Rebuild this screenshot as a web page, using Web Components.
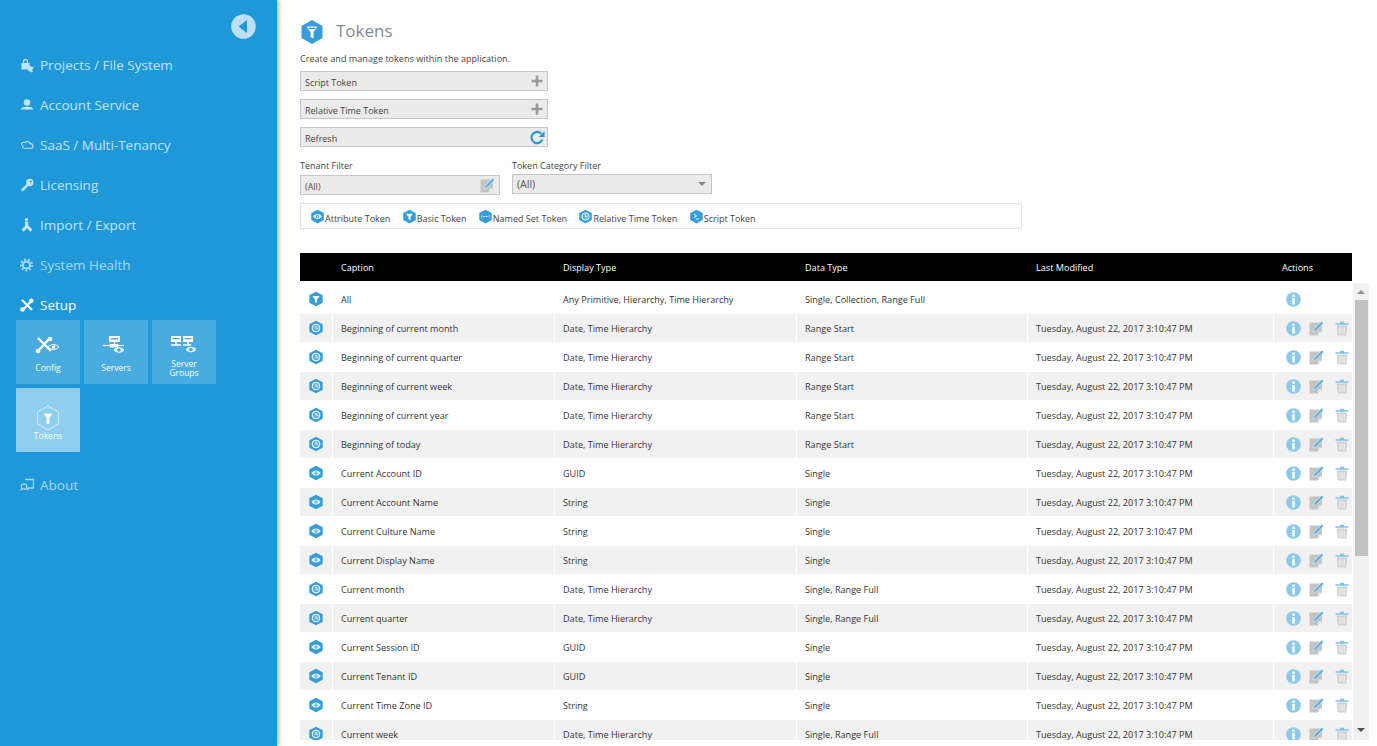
<!DOCTYPE html>
<html><head><meta charset="utf-8"><style>
html,body{margin:0;height:100%;overflow:hidden;background:#fff;font-family:"Open Sans","Noto Sans",sans-serif}
body{display:flex;height:746px}
</style></head><body>
<app-sidebar></app-sidebar>
<tokens-page></tokens-page>
<script>
const HEX='M12 1 22 6.500V17.500L12 23 2 17.500V6.500Z';
const BLUE='#359dda';
const glyph={
 funnel:'<path d="M6.500 7.500h11l-4 5.200v5.300l-3-1.500v-3.800z" fill="#fff"/>',
 clock:`<circle cx="12" cy="12" r="5.800" fill="#62b3e4" stroke="#fff" stroke-width="1.500"/><path d="M12 8.800v3.600h3" fill="none" stroke="#fff" stroke-width="1.300"/>`,
 eye:`<path d="M5 12c2-2.800 4.500-3.900 7-3.900s5 1.100 7 3.900c-2 2.800-4.500 3.900-7 3.900s-5-1.100-7-3.900z" fill="#e4f3fb"/><circle cx="12" cy="12" r="2.400" fill="${BLUE}"/><circle cx="12" cy="12" r="1" fill="#fff"/>`,
 dots:'<path d="M6 10v4M18 10v4" stroke="#fff" stroke-width="1" fill="none"/><path d="M8 12h8" stroke="#fff" stroke-width="1.600" stroke-dasharray="1.400 1.100" fill="none"/>',
 script:'<path d="M8 8l4 3-4 3" fill="none" stroke="#fff" stroke-width="1.600"/><path d="M11 16h5" stroke="#fff" stroke-width="1.500"/>'
};
const hexIcon=(g,s=16)=>`<svg width="${s}" height="${s}" viewBox="0 0 24 24" style="display:block;flex:none"><path d="${HEX}" fill="${BLUE}"/>${glyph[g]}</svg>`;
const plus=`<svg width="12" height="12" viewBox="0 0 12 12"><path d="M6 .5v11M.5 6h11" stroke="#9a9a9a" stroke-width="2.600"/></svg>`;
const refresh=`<svg width="15" height="15" viewBox="0 0 16 16" style="margin-right:-2px"><path d="M13.200 10.300A6 6 0 1 1 12 4" fill="none" stroke="#2f96d6" stroke-width="2.400"/><path d="M15.500 1.200v6.300H9.200z" fill="#2f96d6"/></svg>`;
const editIcon=(s=16,o=1)=>`<svg width="${s}" height="${s}" viewBox="0 0 16 16" style="display:block;flex:none;opacity:${o}"><path d="M.5 2.500h12.500v8.500l-4.500 4.500H.5z" fill="#c4c4c4"/><path d="M9 11.500h4l-4 4z" fill="#e4e4e4"/><path d="M4 11.800 5 9l7.800-7.800 1.900 1.900L7 10.800z" fill="#62b2e5" stroke="#eef6fb" stroke-width=".5"/></svg>`;
const infoIcon=`<svg width="15" height="15" viewBox="0 0 15 15" style="display:block;flex:none"><circle cx="7.500" cy="7.500" r="7.300" fill="#8cc8ea"/><rect x="6.200" y="2.500" width="2.600" height="2.400" fill="#fff"/><rect x="6.200" y="6" width="2.600" height="6.500" fill="#fff"/></svg>`;
const trashIcon=`<svg width="14" height="15" viewBox="0 0 14 15" style="display:block;flex:none"><path d="M.5 2.200h13v1.600H.5zM5 .7h4v1.600H5z" fill="#7fc2e8"/><path d="M1.800 4.600h10.400l-.8 10H2.600z" fill="#d2d2d2"/><path d="M4.800 6.200v7M7 6.200v7M9.200 6.200v7" stroke="#f3f3f3" stroke-width="1"/></svg>`;

const sideIcons={
 projects:'<path d="M1.500 5H3V3C3 .4 8 .4 8 3V5h1.500v3.500l1-1 1 1.500h2v1.500l-1.500 1 1 2-1.500 1-1.500-1.500-1 1-1-2.500H1.500z" fill="currentColor"/><path d="M4.300 5V3.200c0-1.300 2.400-1.300 2.400 0V5z" fill="#1e98d9"/>',
 account:'<circle cx="7" cy="4.500" r="3.300" fill="currentColor"/><path d="M.5 11.500c.5-2.200 3-2.800 6.500-2.800s6 .6 6.500 2.800z" fill="currentColor"/>',
 saas:'<path d="M2 7.500C.5 5.500 3 3.500 5 4.500 7 2.800 9.500 3.500 10 5.700c3-.6 4.500 4.300 1 4.600H4.500C3 10.300 1.500 9 3.500 7.300" fill="none" stroke="currentColor" stroke-width="1.100"/>',
 key:'<circle cx="9.800" cy="4.500" r="3.700" fill="currentColor"/><path d="M8 6.500 1.800 12.700" stroke="currentColor" stroke-width="2.600"/><circle cx="10.800" cy="3.500" r="1" fill="#1e98d9"/>',
 importx:'<circle cx="6.500" cy="1.800" r="1.700" fill="currentColor"/><path d="M4.800 3.800h3.400v3.700l4.300 4-2 2.300-3.500-3.500-3.500 3.500-2-2.300 3.800-4z" fill="currentColor"/>',
 health:'<circle cx="6.500" cy="7" r="3.600" fill="none" stroke="currentColor" stroke-width="2"/><circle cx="6.500" cy="7" r="5.600" fill="none" stroke="currentColor" stroke-width="2" stroke-dasharray="1.900 2"/>',
 setup:'<path d="M2 2l10 10M12.500 2 2 12.500" stroke="currentColor" stroke-width="2.200"/><circle cx="11.300" cy="2.700" r="2.300" fill="currentColor"/><circle cx="2.500" cy="11.500" r="2.300" fill="currentColor"/>',
 about:'<path d="M5 1.500h8.500v8.500H8.500l-1.500 2" fill="none" stroke="currentColor" stroke-width="1.300"/><circle cx="4" cy="8.500" r="2.700" fill="none" stroke="currentColor" stroke-width="1.300"/><path d="M2 10.500.5 12.500" stroke="currentColor" stroke-width="1.300"/>'
};

class NavItem extends HTMLElement{
 connectedCallback(){
  const ic=this.getAttribute('icon');
  this.attachShadow({mode:'open'}).innerHTML=`<style>
  :host{display:flex;align-items:center;height:40px;padding-left:20px;gap:6px;color:var(--c,#c2e4f7);font-size:13.500px;line-height:1}
  svg{flex:none;width:14px;height:15px}
  .t{padding-top:2px;color:var(--c,#c2e4f7)}
  </style><svg viewBox="0 0 14 15">${sideIcons[ic]}</svg><div class="t"><slot></slot></div>`;
 }
}
customElements.define('nav-item',NavItem);

const tileIcons={
 config:'<path d="M3 2l13 13M15 2 3 15" stroke="#fff" stroke-width="2.300"/><circle cx="15" cy="3" r="2.300" fill="#fff"/><circle cx="3" cy="15" r="2.300" fill="#fff"/><path d="M13 11c2.800-3.300 8-3.300 11 0-3 3.300-8.200 3.300-11 0z" fill="#4aabe0" stroke="#fff"/><circle cx="18.500" cy="11" r="1.800" fill="#fff"/>',
 servers:'<rect x="6" y="0" width="11" height="6" fill="#fff"/><rect x="8" y="2" width="7" height="1.500" fill="#4aabe0"/><path d="M11.500 6v3" stroke="#fff" stroke-width="1.500"/><path d="M0 9.500h21" stroke="#fff" stroke-width="1.200"/><rect x="7" y="8" width="8" height="3.500" fill="#fff"/><path d="M11 14c2.500-3 7.500-3 10 0-2.500 3-7.500 3-10 0z" fill="#cfeaf8" stroke="#fff"/><circle cx="16" cy="14" r="1.700" fill="#4aabe0"/>',
 groups:'<rect x="0" y="0" width="10" height="6" fill="#fff"/><rect x="12" y="0" width="10" height="6" fill="#fff"/><rect x="1.500" y="2" width="7" height="1.300" fill="#4aabe0"/><rect x="13.500" y="2" width="7" height="1.300" fill="#4aabe0"/><path d="M0 9h10M12 9h8M5 6v3M17 6v3" stroke="#fff" stroke-width="1.400"/><path d="M15 13.500c2.500-3 7.500-3 10 0-2.500 3-7.500 3-10 0z" fill="#cfeaf8" stroke="#fff"/><circle cx="20" cy="13.500" r="1.700" fill="#4aabe0"/>'
};
class SideTile extends HTMLElement{
 connectedCallback(){
  const ic=this.getAttribute('icon'),act=this.hasAttribute('active');
  const svg=ic==='tokens'
   ?`<svg width="24" height="26" viewBox="0 0 24 26"><path d="M12 1 22.500 7V19L12 25 1.500 19V7Z" fill="none" stroke="#cfe9f8" stroke-width="1.100"/><path d="M7.500 8.500h9l-3.100 4.200v6.300h-2.800v-6.300z" fill="#fff"/></svg>`
   :`<svg width="26" height="18" viewBox="0 0 26 18">${tileIcons[ic]}</svg>`;
  this.attachShadow({mode:'open'}).innerHTML=`<style>
  :host{display:flex;flex-direction:column;align-items:center;width:64px;height:64px;box-sizing:border-box;padding-top:${ic==='tokens'?17:16}px;background:${act?'#8fceee':'#4aabe0'};color:#fff;font-size:8.500px;line-height:9px;text-align:center}
  .ic{height:${ic==='tokens'?26:21}px;display:flex;justify-content:center;align-items:flex-start}
  .t{margin-top:${ic==='groups'?2:ic==='tokens'?0:6}px}
  </style><div class="ic">${svg}</div><div class="t"><slot></slot></div>`;
 }
}
customElements.define('side-tile',SideTile);

class AppSidebar extends HTMLElement{
 connectedCallback(){
  this.attachShadow({mode:'open'}).innerHTML=`<style>
  :host{display:block;width:277px;flex:none;height:746px;background:#1e98d9;box-shadow:2px 0 4px rgba(0,0,0,.3);position:relative;z-index:1}
  .top{display:flex;justify-content:flex-end;padding:14px 21px 0 0;height:31px}
  nav{display:flex;flex-direction:column;margin-top:0}
  .tiles{display:grid;grid-template-columns:repeat(3,64px);gap:4px;padding:0 0 0 16px;margin-top:-5px;margin-bottom:13px}
  .dim{--c:#a9d8f3}
  .on{--c:#fff}
  </style>
  <div class="top"><svg width="25" height="25" viewBox="0 0 25 25"><circle cx="12.500" cy="12.500" r="12.300" fill="#bde0f5"/><path d="M16 6v13L7.500 12.500z" fill="#1e98d9"/></svg></div>
  <nav>
   <nav-item icon="projects">Projects / File System</nav-item>
   <nav-item icon="account">Account Service</nav-item>
   <nav-item icon="saas">SaaS / Multi-Tenancy</nav-item>
   <nav-item icon="key">Licensing</nav-item>
   <nav-item icon="importx">Import / Export</nav-item>
   <nav-item class="dim" icon="health">System Health</nav-item>
   <nav-item class="on" icon="setup">Setup</nav-item>
   <div class="tiles">
    <side-tile icon="config">Config</side-tile>
    <side-tile icon="servers">Servers</side-tile>
    <side-tile icon="groups">Server<br>Groups</side-tile>
    <side-tile icon="tokens" active>Tokens</side-tile>
   </div>
   <nav-item class="dim" icon="about">About</nav-item>
  </nav>`;
 }
}
customElements.define('app-sidebar',AppSidebar);

class ActionButton extends HTMLElement{
 connectedCallback(){
  const k=this.getAttribute('kind');
  this.attachShadow({mode:'open'}).innerHTML=`<style>
  :host{display:flex;align-items:center;justify-content:space-between;width:248px;height:20px;box-sizing:border-box;padding:3px 4px 0 4px;background:#ebebeb;border:1px solid #c6c6c6;border-bottom-width:1.500px;font-size:9px;color:#444}
  span{display:flex;margin-top:-3px}
  </style><slot></slot><span>${k==='refresh'?refresh:plus}</span>`;
 }
}
customElements.define('action-button',ActionButton);

class FilterField extends HTMLElement{
 connectedCallback(){
  const sel=this.hasAttribute('select');
  this.attachShadow({mode:'open'}).innerHTML=`<style>
  :host{display:block;width:200px;font-size:9px;color:#444}
  label{display:block;height:${sel?14:15}px;line-height:12px}
  .box{display:flex;align-items:center;justify-content:space-between;height:20px;box-sizing:border-box;padding:${sel?'0 5px 0 4px':'0 3px 0 4px'};background:#ebebeb;border:1px solid #c6c6c6;font-size:${sel?10.500:9}px;color:#555}
  .v{padding-top:${sel?0:2}px}
  .arrow{width:0;height:0;border:4px solid transparent;border-top:4px solid #888;border-bottom:0}
  </style><label><slot></slot></label><div class="box"><span class="v">(All)</span>${sel?'<span class="arrow"></span>':editIcon(16)}</div>`;
 }
}
customElements.define('filter-field',FilterField);

class LegendItem extends HTMLElement{
 connectedCallback(){
  this.attachShadow({mode:'open'}).innerHTML=`<style>
  :host{display:flex;align-items:flex-start;font-size:9px;color:#444;line-height:16px}
  span{margin-top:2px}
  </style>${hexIcon(this.getAttribute('icon'),15)}<span><slot></slot></span>`;
 }
}
customElements.define('legend-item',LegendItem);

class TokenRow extends HTMLElement{
 connectedCallback(){
  const d=this.dataset,odd=this.hasAttribute('shade');
  const bg=odd?'#f1f1f1':'#fff';
  this.attachShadow({mode:'open'}).innerHTML=`<style>
  :host{display:grid;grid-template-columns:var(--cols);column-gap:1px;height:28px;margin-bottom:1px;font-size:9.100px;color:#333;flex:none}
  div{background:${bg};display:flex;align-items:center;padding-left:8px;white-space:nowrap;overflow:hidden}
  .a{padding-left:12px;overflow:visible}
  .a svg:nth-child(2){margin-left:8px}
  .a svg:nth-child(3){margin-left:10px}
  </style><div>${hexIcon(d.i)}</div><div>${d.c}</div><div>${d.t}</div><div>${d.k}</div><div>${d.m||''}</div><div class="a">${infoIcon}${d.m?editIcon(16)+trashIcon:''}</div>`;
 }
}
customElements.define('token-row',TokenRow);

const M='Tuesday, August 22, 2017 3:10:47 PM',DT='Date, Time Hierarchy';
const rows=[
['funnel','All','Any Primitive, Hierarchy, Time Hierarchy','Single, Collection, Range Full',''],
['clock','Beginning of current month',DT,'Range Start',M],
['clock','Beginning of current quarter',DT,'Range Start',M],
['clock','Beginning of current week',DT,'Range Start',M],
['clock','Beginning of current year',DT,'Range Start',M],
['clock','Beginning of today',DT,'Range Start',M],
['eye','Current Account ID','GUID','Single',M],
['eye','Current Account Name','String','Single',M],
['eye','Current Culture Name','String','Single',M],
['eye','Current Display Name','String','Single',M],
['clock','Current month',DT,'Single, Range Full',M],
['clock','Current quarter',DT,'Single, Range Full',M],
['eye','Current Session ID','GUID','Single',M],
['eye','Current Tenant ID','GUID','Single',M],
['eye','Current Time Zone ID','String','Single',M],
['clock','Current week',DT,'Single, Range Full',M]
];

class TokenTable extends HTMLElement{
 connectedCallback(){
  const r=this.attachShadow({mode:'open'});
  r.innerHTML=`<style>
  :host{display:block;--cols:32px 221px 241px 230px 245px 78px;width:1069px}
  .head{display:grid;grid-template-columns:var(--cols);column-gap:1px;width:1052px;height:28px;background:#000;color:#fff;font-size:9.100px;align-items:center;margin-bottom:2px}
  .head span{padding-left:8px}
  .wrap{display:flex;gap:1px;height:457px}
  .body{width:1052px;height:457px;overflow:hidden;display:flex;flex-direction:column;padding-top:2px;box-sizing:border-box}
  .sb{width:16px;background:#f1f1f1;display:flex;flex-direction:column;align-items:center}
  .up,.dn{height:17px;display:flex;align-items:center;justify-content:center;flex:none}
  .up i{border:4px solid transparent;border-bottom:4px solid #8f8f8f;border-top:0}
  .dn i{border:4px solid transparent;border-top:4px solid #505050;border-bottom:0}
  .th{width:13px;height:256px;background:#c1c1c1;flex:none}
  .sp{flex:1}
  .dn{margin-bottom:2px}
  </style>
  <div class="head"><span></span><span>Caption</span><span>Display Type</span><span>Data Type</span><span>Last Modified</span><span>Actions</span></div>
  <div class="wrap"><div class="body"></div><div class="sb"><div class="up"><i></i></div><div class="th"></div><div class="sp"></div><div class="dn"><i></i></div></div></div>`;
  const b=r.querySelector('.body');
  rows.forEach((x,i)=>{const e=document.createElement('token-row');
   e.dataset.i=x[0];e.dataset.c=x[1];e.dataset.t=x[2];e.dataset.k=x[3];e.dataset.m=x[4];
   if(i%2)e.setAttribute('shade','');b.append(e)});
 }
}
customElements.define('token-table',TokenTable);

class TokensPage extends HTMLElement{
 connectedCallback(){
  this.attachShadow({mode:'open'}).innerHTML=`<style>
  :host{display:block;flex:1;min-width:0;padding:18px 0 0 23px;overflow:hidden;color:#444}
  .title{display:flex;align-items:center;height:27px;gap:12px;font-size:17px;color:#858a96}
  .title span{margin-top:-2px}
  p{margin:8px 0 0;font-size:9.100px;line-height:12px;color:#444;height:12px}
  .btns{display:flex;flex-direction:column;gap:8px;margin-top:6px}
  .filters{display:flex;gap:12px;margin-top:13px;align-items:flex-end}
  .legend{display:flex;gap:11.400px;align-items:flex-start;width:722px;height:26px;box-sizing:border-box;border:1px solid #e2e2e2;padding:5px 9px 0;margin-top:8px}
  token-table{margin-top:24px}
  </style>
  <div class="title"><svg width="24" height="26" viewBox="0 0 24 26"><path d="M12 1 22.500 7V19L12 25 1.500 19V7Z" fill="${BLUE}"/><path d="M6.500 7.500h11l-4 5.500v6.500l-3-1.500V13z" fill="#fff"/><path d="M8.500 8.800h7l-1.200 1.500H9.700z" fill="${BLUE}"/></svg><span>Tokens</span></div>
  <p>Create and manage tokens within the application.</p>
  <div class="btns">
   <action-button kind="plus">Script Token</action-button>
   <action-button kind="plus">Relative Time Token</action-button>
   <action-button kind="refresh">Refresh</action-button>
  </div>
  <div class="filters">
   <filter-field>Tenant Filter</filter-field>
   <filter-field select style="margin-bottom:1px">Token Category Filter</filter-field>
  </div>
  <div class="legend">
   <legend-item icon="eye">Attribute Token</legend-item>
   <legend-item icon="funnel">Basic Token</legend-item>
   <legend-item icon="dots">Named Set Token</legend-item>
   <legend-item icon="clock">Relative Time Token</legend-item>
   <legend-item icon="script">Script Token</legend-item>
  </div>
  <token-table></token-table>`;
 }
}
customElements.define('tokens-page',TokensPage);
</script>
</body></html>
